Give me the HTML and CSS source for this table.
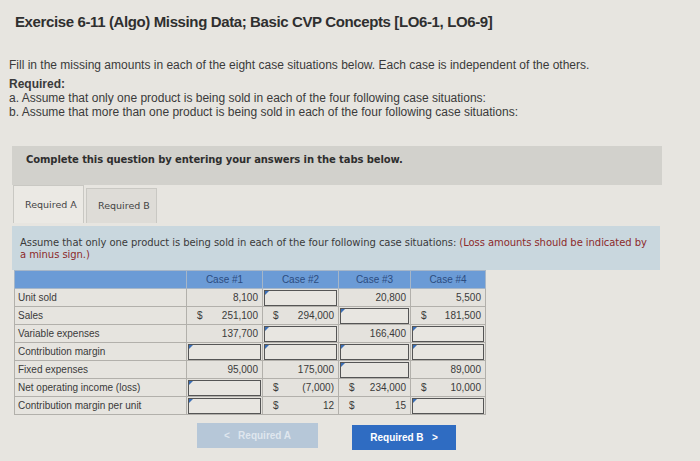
FILE: index.html
```html
<!DOCTYPE html>
<html>
<head>
<meta charset="utf-8">
<link rel="stylesheet" href="styles.css">
</head>
<body>
<h1 class="title">Exercise 6-11 (Algo) Missing Data; Basic CVP Concepts [LO6-1, LO6-9]</h1>
<p class="intro">Fill in the missing amounts in each of the eight case situations below. Each case is independent of the others.</p>
<div class="req">
  <div class="req-head">Required:</div>
  <div>a. Assume that only one product is being sold in each of the four following case situations:</div>
  <div>b. Assume that more than one product is being sold in each of the four following case situations:</div>
</div>
<div class="banner">Complete this question by entering your answers in the tabs below.</div>
<div class="tabs">
  <div class="tab active">Required A</div>
  <div class="tab">Required B</div>
</div>
<div class="panel">
  <div class="instr">
    <div class="instr-line">Assume that only one product is being sold in each of the four following case situations: <span class="loss">(Loss amounts should be indicated by</span></div>
    <div class="instr-line loss">a minus sign.)</div>
  </div>
  <table class="grid">
    <colgroup>
      <col class="c-label"><col class="c1"><col class="c2"><col class="c3"><col class="c4">
    </colgroup>
    <thead>
      <tr><th></th><th>Case #1</th><th>Case #2</th><th>Case #3</th><th>Case #4</th></tr>
    </thead>
    <tbody>
      <tr><td class="lbl">Unit sold</td>
        <td><div class="cell"><span class="val">8,100</span></div></td>
        <td><div class="inp"></div></td>
        <td><div class="cell"><span class="val">20,800</span></div></td>
        <td><div class="cell"><span class="val">5,500</span></div></td></tr>
      <tr><td class="lbl">Sales</td>
        <td><div class="cell"><span class="cur">$</span><span class="val">251,100</span></div></td>
        <td><div class="cell"><span class="cur">$</span><span class="val">294,000</span></div></td>
        <td><div class="inp"></div></td>
        <td><div class="cell"><span class="cur">$</span><span class="val">181,500</span></div></td></tr>
      <tr><td class="lbl">Variable expenses</td>
        <td><div class="cell"><span class="val">137,700</span></div></td>
        <td><div class="inp"></div></td>
        <td><div class="cell"><span class="val">166,400</span></div></td>
        <td><div class="inp"></div></td></tr>
      <tr><td class="lbl">Contribution margin</td>
        <td><div class="inp"></div></td>
        <td><div class="inp"></div></td>
        <td><div class="inp"></div></td>
        <td><div class="inp"></div></td></tr>
      <tr><td class="lbl">Fixed expenses</td>
        <td><div class="cell"><span class="val">95,000</span></div></td>
        <td><div class="cell"><span class="val">175,000</span></div></td>
        <td><div class="inp"></div></td>
        <td><div class="cell"><span class="val">89,000</span></div></td></tr>
      <tr><td class="lbl">Net operating income (loss)</td>
        <td><div class="inp"></div></td>
        <td><div class="cell"><span class="cur">$</span><span class="val">(7,000)</span></div></td>
        <td><div class="cell"><span class="cur">$</span><span class="val">234,000</span></div></td>
        <td><div class="cell"><span class="cur">$</span><span class="val">10,000</span></div></td></tr>
      <tr><td class="lbl">Contribution margin per unit</td>
        <td><div class="inp"></div></td>
        <td><div class="cell"><span class="cur">$</span><span class="val">12</span></div></td>
        <td><div class="cell"><span class="cur">$</span><span class="val">15</span></div></td>
        <td><div class="inp"></div></td></tr>
    </tbody>
  </table>
  <div class="nav">
    <button class="btn prev">&lt;&nbsp;&nbsp; Required A</button>
    <button class="btn next">Required B &nbsp;&nbsp;&gt;</button>
  </div>
</div>
</body>
</html>
```
FILE: styles.css
```css
* { box-sizing: border-box; }
html, body { margin: 0; padding: 0; }
body {
  width: 700px;
  height: 461px;
  overflow: hidden;
  background: #e7e5e0;
  color: #333;
  font-family: "Liberation Sans", Arial, sans-serif;
}
.title {
  margin: 0;
  padding: 13px 0 0 15px;
  font-size: 15px;
  line-height: 18px;
  font-weight: bold;
  color: #2f2f2f;
  letter-spacing: -0.38px;
}
.intro {
  margin: 0;
  padding: 27px 0 0 9px;
  font-size: 12px;
  line-height: 14px;
  color: #3a3a3a;
}
.req {
  padding: 5px 0 0 9px;
  font-size: 12px;
  line-height: 14px;
  color: #3a3a3a;
}
.req-head { font-weight: bold; }
.banner {
  margin: 27px 38px 0 12px;
  height: 39px;
  background: #d2d1cc;
  padding: 7px 0 0 14px;
  font-family: "DejaVu Sans", Verdana, sans-serif;
  font-weight: bold;
  font-size: 10px;
  line-height: 14px;
  color: #2e2e2e;
  letter-spacing: -0.1px;
}
.tabs {
  display: flex;
  align-items: flex-end;
  gap: 2px;
  margin: 0 0 0 13px;
  height: 38px;
}
.tab {
  width: 71px;
  height: 38px;
  border: 1px solid #c9c8c3;
  border-bottom: none;
  font-family: "DejaVu Sans", Verdana, sans-serif;
  font-size: 9.5px;
  color: #444;
  padding: 13px 0 0 11px;
  background: #ebe9e4;
}
.tab:not(.active) { height: 35px; padding-top: 11px; background: #dedcd7; }
.panel {
  margin: 3px 40px 0 12px;
  background: linear-gradient(#c9d7de, #c9d7de) no-repeat top left / 100% 44px;
}
.instr {
  padding: 11px 6px 0 8px;
  height: 44px;
  font-family: "DejaVu Sans", Verdana, sans-serif;
  font-size: 10px;
  line-height: 12px;
  letter-spacing: -0.06px;
  color: #3a3a3a;
}
.instr-line { white-space: nowrap; }
.loss { color: #8c2a2a; }
.grid {
  margin-left: 2px;
  border-collapse: collapse;
  font-size: 10px;
  color: #3a3a3a;
  background: #e4e2dd;
}
.c-label { width: 172px; }
.c1, .c2 { width: 76px; }
.c3 { width: 72px; }
.c4 { width: 75px; }
.grid th {
  height: 18px;
  background: #6b9bd6;
  color: #2c4c80;
  font-weight: normal;
  font-size: 10px;
  border: 1px solid #a6b6c8;
  padding: 0;
}
.grid td {
  height: 18px;
  padding: 0;
  border: 1px solid #b2b0ab;
}
.grid td.lbl {
  padding-left: 3px;
  background: #e6e4df;
}
.cell {
  display: flex;
  align-items: center;
  padding: 0 4px 0 10px;
}
.cur { flex: none; }
.val { margin-left: auto; }
.inp {
  position: relative;
  height: 16px;
  margin: 0 1px;
  border: 1px solid #555;
  background: #e8e6e1;
}
.inp::before {
  content: "";
  position: absolute;
  top: 0;
  left: 0;
  border-top: 4px solid #3b6fb6;
  border-right: 4px solid transparent;
}
.nav {
  display: flex;
  gap: 34px;
  margin: 8px 0 0 185px;
}
.btn {
  border: none;
  height: 25px;
  font-family: "Liberation Sans", Arial, sans-serif;
  font-size: 10px;
  font-weight: bold;
}
.prev {
  width: 121px;
  background: #b6c7d8;
  color: #dfe6ee;
}
.next {
  width: 104px;
  margin-top: 2px;
  background: #2f6cc2;
  color: #fff;
}
```
